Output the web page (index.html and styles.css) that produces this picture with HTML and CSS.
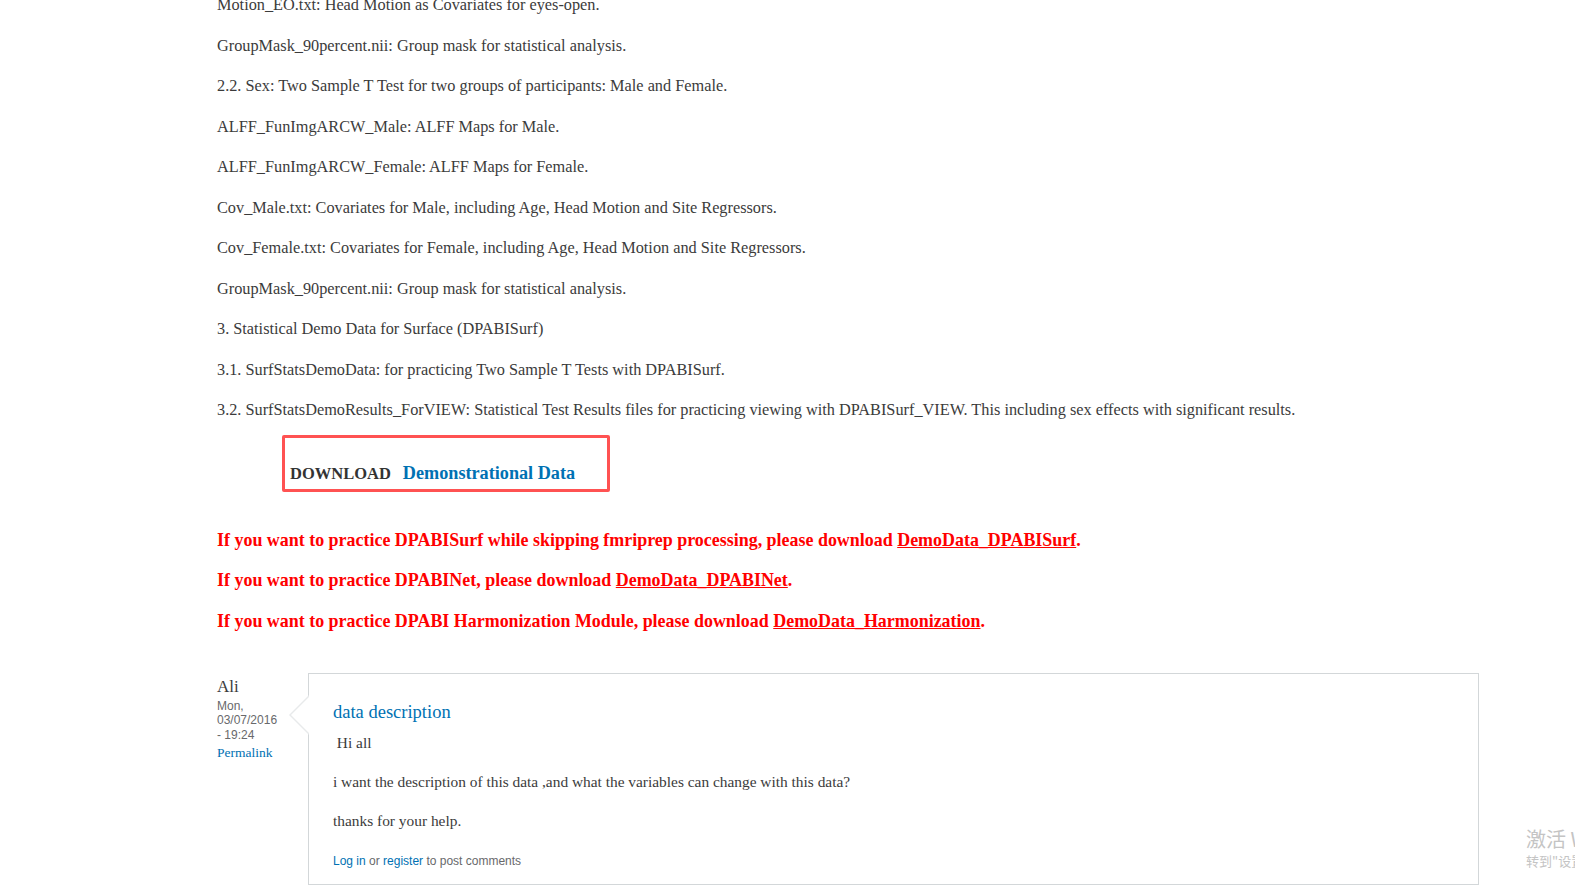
FILE: index.html
```html
<!DOCTYPE html>
<html lang="en">
<head>
    <meta charset="UTF-8">
    <title>Demo Data</title>
    <link rel="stylesheet" href="styles.css">
</head>
<body>
    <div class="page">
        <div class="content">
            <p>Motion_EO.txt: Head Motion as Covariates for eyes-open.</p>
            <p>GroupMask_90percent.nii: Group mask for statistical analysis.</p>
            <p>2.2. Sex: Two Sample T Test for two groups of participants: Male and Female.</p>
            <p>ALFF_FunImgARCW_Male: ALFF Maps for Male.</p>
            <p>ALFF_FunImgARCW_Female: ALFF Maps for Female.</p>
            <p>Cov_Male.txt: Covariates for Male, including Age, Head Motion and Site Regressors.</p>
            <p>Cov_Female.txt: Covariates for Female, including Age, Head Motion and Site Regressors.</p>
            <p>GroupMask_90percent.nii: Group mask for statistical analysis.</p>
            <p>3. Statistical Demo Data for Surface (DPABISurf)</p>
            <p>3.1. SurfStatsDemoData: for practicing Two Sample T Tests with DPABISurf.</p>
            <p>3.2. SurfStatsDemoResults_ForVIEW: Statistical Test Results files for practicing viewing with DPABISurf_VIEW. This including sex effects with significant results.</p>

            <div class="download">
                <strong>DOWNLOAD</strong>
                <a href="#">Demonstrational Data</a>
            </div>

            <p class="note first">If you want to practice DPABISurf while skipping fmriprep processing, please download <a href="#">DemoData_DPABISurf</a>.</p>
            <p class="note">If you want to practice DPABINet, please download <a href="#">DemoData_DPABINet</a>.</p>
            <p class="note">If you want to practice DPABI Harmonization Module, please download <a href="#">DemoData_Harmonization</a>.</p>
        </div>

        <div class="comment">
            <div class="comment-meta">
                <div class="author">Ali</div>
                <div class="date">Mon, 03/07/2016 - 19:24</div>
                <a href="#" class="permalink">Permalink</a>
            </div>
            <div class="comment-box">
                <h3><a href="#">data description</a></h3>
                <p>&nbsp;Hi all</p>
                <p>i want the description of this data ,and what the variables can change with this data?</p>
                <p>thanks for your help.</p>
                <div class="links"><a href="#">Log in</a> or <a href="#">register</a> to post comments</div>
            </div>
        </div>
    </div>

    <div class="watermark">
        <div class="wm-big">激活 Windows</div>
        <div class="wm-small">转到"设置"以激活 Windows。</div>
    </div>
</body>
</html>
```

FILE: styles.css
```css
body {
    margin: 0;
    background-color: #ffffff;
    color: #3b3b3b;
    font-family: "Liberation Serif", "DejaVu Serif", serif;
    overflow: hidden;
    height: 890px;
}

.page {
    margin-top: -6px;
    padding-left: 217px;
    width: 1262px;
}

.content p {
    font-size: 16.3px;
    line-height: 21px;
    margin: 0 0 19.5px 0;
}

.download {
    margin: -5px 0 0 65px;
    width: 317px;
    height: 48px;
    border: 3px solid #ff5252;
    border-radius: 2px;
    padding: 3px 0 0 5px;
    display: flex;
    align-items: flex-end;
    gap: 12px;
    font-weight: bold;
    color: #333333;
}

.download strong {
    font-size: 16.5px;
    line-height: 21px;
    padding-bottom: 5px;
}

.download a {
    font-size: 18.2px;
    color: #0071b3;
    text-decoration: none;
    line-height: 21px;
    padding-bottom: 5px;
}

.content p.note {
    color: #ff0000;
    font-weight: bold;
    font-size: 17.95px;
    margin-bottom: 19.5px;
}

.content p.first {
    margin-top: 38px;
}

.note a {
    color: #ff0000;
    text-decoration: underline;
}

.comment {
    display: flex;
    margin-top: 41px;
}

.comment-meta {
    width: 66px;
    padding-top: 4px;
    margin-right: 25px;
}

.author {
    font-size: 17px;
    line-height: 20px;
}

.date {
    font-family: "Liberation Sans", Arial, sans-serif;
    font-size: 12px;
    line-height: 14.5px;
    color: #68696b;
    margin-top: 2px;
}

.permalink {
    display: block;
    font-size: 13.5px;
    color: #0071b3;
    text-decoration: none;
    margin-top: 3px;
}

.comment-box {
    position: relative;
    flex: 1;
    border: 1px solid #d3d7d9;
    padding: 26px 24px 16px 24px;
}

.comment-box::before {
    content: "";
    position: absolute;
    left: -20px;
    top: 21px;
    width: 0;
    height: 0;
    border-top: 20px solid transparent;
    border-bottom: 20px solid transparent;
    border-right: 20px solid #e8eaeb;
}

.comment-box::after {
    content: "";
    position: absolute;
    left: -18px;
    top: 22px;
    width: 0;
    height: 0;
    border-top: 19px solid transparent;
    border-bottom: 19px solid transparent;
    border-right: 19px solid #ffffff;
}

.comment-box h3 {
    margin: 0 0 9px 0;
    font-size: 18.5px;
    font-weight: normal;
    line-height: 24px;
}

.comment-box h3 a {
    color: #0071b3;
    text-decoration: none;
}

.comment-box p {
    font-size: 15.4px;
    line-height: 20px;
    margin: 0 0 19px 0;
}

.links {
    font-family: "Liberation Sans", Arial, sans-serif;
    font-size: 12px;
    color: #68696b;
    margin-top: 23px;
}

.links a {
    color: #0071b3;
    text-decoration: none;
}

.watermark {
    position: absolute;
    left: 1526px;
    top: 826px;
    font-family: "Noto Sans CJK SC", sans-serif;
    color: #c4c4c4;
    white-space: nowrap;
}

.wm-big {
    font-size: 20px;
    line-height: 26px;
}

.wm-small {
    font-size: 13px;
    line-height: 18px;
}
```
